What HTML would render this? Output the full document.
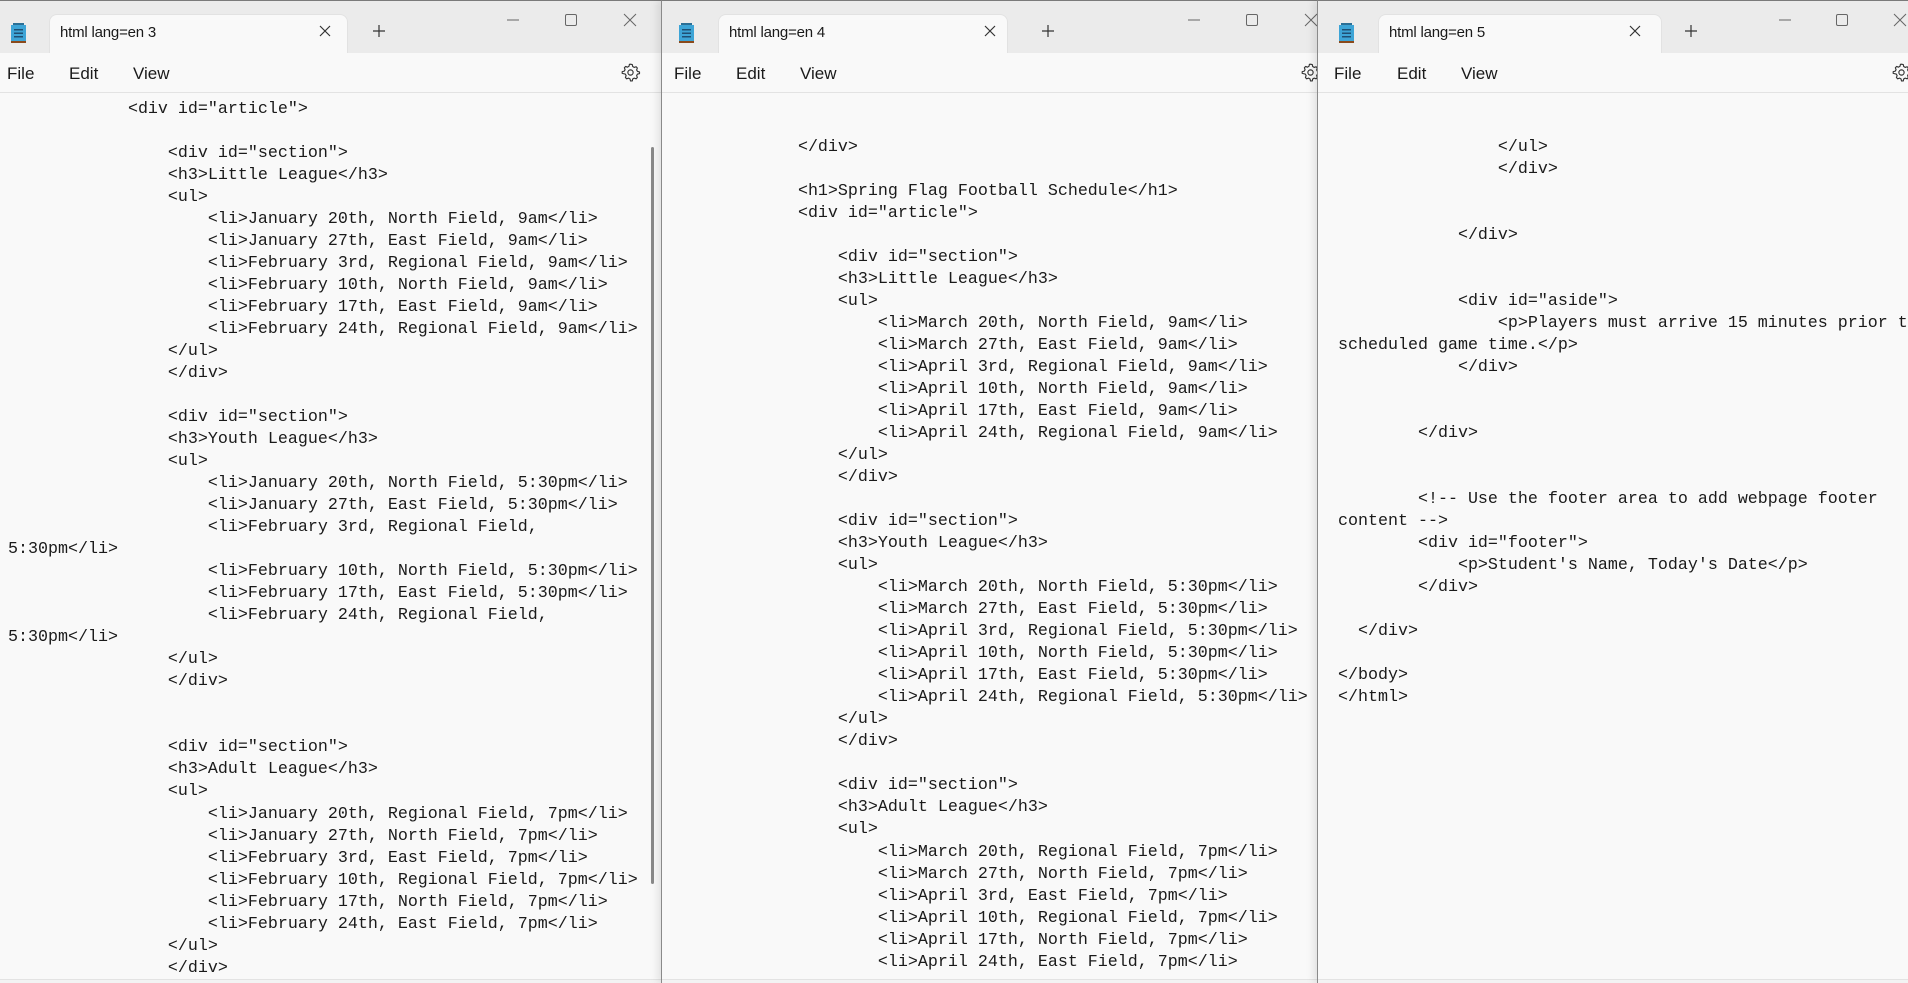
<!DOCTYPE html>
<html><head><meta charset="utf-8"><style>
*{margin:0;padding:0;box-sizing:border-box}
body{width:1908px;height:983px;overflow:hidden;background:#f9f9f9;position:relative;font-family:"Liberation Sans",sans-serif}
.win{position:absolute;top:0;height:983px;background:#f9f9f9;overflow:hidden;border-top:1px solid #7a7a7a}
.w2,.w3{border-left:1px solid #8a8a8a;box-shadow:-3px 0 8px rgba(0,0,0,.10)}
.tb{position:absolute;left:0;right:0;top:0;height:52px;background:#ebebeb}
.tab{position:absolute;top:13px;height:40px;width:299px;background:#f9f9f9;border-radius:8px 8px 0 0;border:1px solid #e2e2e2;border-bottom:none}
.tab span{position:absolute;left:10px;top:9px;font-size:15px;color:#1a1a1a;letter-spacing:-.2px}
.tab .x{position:absolute;left:268px;top:9px;width:14px;height:14px}
.plus{position:absolute;top:23px;width:14px;height:14px}
.ico{position:absolute;top:22px;width:15px;height:20px}
.ctl{position:absolute;top:12px;width:14px;height:14px}
.mb{position:absolute;left:0;right:0;top:52px;height:40px;background:#f9f9f9;border-bottom:1px solid #e3e3e3}
.mb span{position:absolute;top:11px;font-size:17px;color:#1a1a1a}
.gear{position:absolute;top:61px;width:21px;height:21px}
pre{position:absolute;font-family:"Liberation Mono",monospace;font-size:16.67px;line-height:22.02px;color:#1a1a1a;white-space:pre}
.sb{position:absolute;top:146px;width:3px;height:737px;background:#8a8a8a;border-radius:2px}
.st{position:absolute;left:0;right:0;top:978px;height:5px;border-top:1px solid #e3e3e3;background:#f3f3f3}
</style></head><body>

<!-- Window 1 -->
<div class="win" style="left:-5px;width:667px">
 <div class="tb"></div>
 <svg class="ico" style="left:16px" viewBox="0 0 15 20"><rect x="0" y="2" width="15" height="16" fill="#3da4d6"/><rect x="2" y="0" width="11" height="2" fill="#2b6f96"/><rect x="3" y="6" width="9" height="1.5" fill="#1f4f73"/><rect x="3" y="9.5" width="9" height="1.5" fill="#1f4f73"/><rect x="3" y="13" width="9" height="1.5" fill="#1f4f73"/><rect x="0" y="18" width="15" height="2" fill="#8a4a1c"/></svg>
 <div class="tab" style="left:54px"><span>html lang=en 3</span><svg class="x" viewBox="0 0 14 14"><path d="M2 2L12 12M12 2L2 12" stroke="#333" stroke-width="1.2"/></svg></div>
 <svg class="plus" style="left:377px" viewBox="0 0 14 14"><path d="M7 1V13M1 7H13" stroke="#333" stroke-width="1.2"/></svg>
 <svg class="ctl" style="left:511px" viewBox="0 0 14 14"><path d="M1 7H13" stroke="#666" stroke-width="1"/></svg>
 <svg class="ctl" style="left:569px" viewBox="0 0 14 14"><rect x="1.5" y="1.5" width="11" height="11" rx="1.5" fill="none" stroke="#666" stroke-width="1"/></svg>
 <svg class="ctl" style="left:628px" viewBox="0 0 14 14"><path d="M1 1L13 13M13 1L1 13" stroke="#666" stroke-width="1"/></svg>
 <div class="mb"><span style="left:12px">File</span><span style="left:74px">Edit</span><span style="left:138px">View</span></div>
 <svg class="gear" style="left:625px" viewBox="0 0 24 24"><path d="M12 2.5l2 .4.5 2.3 1.7 1 2.2-.8 1.4 1.5-.8 2.2 1 1.7 2.3.5v2l-2.3.5-1 1.7.8 2.2-1.4 1.5-2.2-.8-1.7 1-.5 2.3h-2l-.5-2.3-1.7-1-2.2.8-1.4-1.5.8-2.2-1-1.7L2.5 13v-2l2.3-.5 1-1.7-.8-2.2L6.4 5.1l2.2.8 1.7-1 .5-2.3z" fill="none" stroke="#333" stroke-width="1.3" stroke-linejoin="round"/><circle cx="12" cy="12" r="3" fill="none" stroke="#333" stroke-width="1.3"/></svg>
 <pre style="left:13px;top:98px">            &lt;div id="article"&gt;

                &lt;div id="section"&gt;
                &lt;h3&gt;Little League&lt;/h3&gt;
                &lt;ul&gt;
                    &lt;li&gt;January 20th, North Field, 9am&lt;/li&gt;
                    &lt;li&gt;January 27th, East Field, 9am&lt;/li&gt;
                    &lt;li&gt;February 3rd, Regional Field, 9am&lt;/li&gt;
                    &lt;li&gt;February 10th, North Field, 9am&lt;/li&gt;
                    &lt;li&gt;February 17th, East Field, 9am&lt;/li&gt;
                    &lt;li&gt;February 24th, Regional Field, 9am&lt;/li&gt;
                &lt;/ul&gt;
                &lt;/div&gt;

                &lt;div id="section"&gt;
                &lt;h3&gt;Youth League&lt;/h3&gt;
                &lt;ul&gt;
                    &lt;li&gt;January 20th, North Field, 5:30pm&lt;/li&gt;
                    &lt;li&gt;January 27th, East Field, 5:30pm&lt;/li&gt;
                    &lt;li&gt;February 3rd, Regional Field,
5:30pm&lt;/li&gt;
                    &lt;li&gt;February 10th, North Field, 5:30pm&lt;/li&gt;
                    &lt;li&gt;February 17th, East Field, 5:30pm&lt;/li&gt;
                    &lt;li&gt;February 24th, Regional Field,
5:30pm&lt;/li&gt;
                &lt;/ul&gt;
                &lt;/div&gt;


                &lt;div id="section"&gt;
                &lt;h3&gt;Adult League&lt;/h3&gt;
                &lt;ul&gt;
                    &lt;li&gt;January 20th, Regional Field, 7pm&lt;/li&gt;
                    &lt;li&gt;January 27th, North Field, 7pm&lt;/li&gt;
                    &lt;li&gt;February 3rd, East Field, 7pm&lt;/li&gt;
                    &lt;li&gt;February 10th, Regional Field, 7pm&lt;/li&gt;
                    &lt;li&gt;February 17th, North Field, 7pm&lt;/li&gt;
                    &lt;li&gt;February 24th, East Field, 7pm&lt;/li&gt;
                &lt;/ul&gt;
                &lt;/div&gt;</pre>
 <div class="sb" style="left:656px"></div>
 <div class="st"></div>
</div>

<!-- Window 2 -->
<div class="win w2" style="left:661px;width:690px">
 <div class="tb"></div>
 <svg class="ico" style="left:17px" viewBox="0 0 15 20"><rect x="0" y="2" width="15" height="16" fill="#3da4d6"/><rect x="2" y="0" width="11" height="2" fill="#2b6f96"/><rect x="3" y="6" width="9" height="1.5" fill="#1f4f73"/><rect x="3" y="9.5" width="9" height="1.5" fill="#1f4f73"/><rect x="3" y="13" width="9" height="1.5" fill="#1f4f73"/><rect x="0" y="18" width="15" height="2" fill="#8a4a1c"/></svg>
 <div class="tab" style="left:56px;width:290px"><span>html lang=en 4</span><svg class="x" viewBox="0 0 14 14" style="left:264px"><path d="M2 2L12 12M12 2L2 12" stroke="#333" stroke-width="1.2"/></svg></div>
 <svg class="plus" style="left:379px" viewBox="0 0 14 14"><path d="M7 1V13M1 7H13" stroke="#333" stroke-width="1.2"/></svg>
 <svg class="ctl" style="left:525px" viewBox="0 0 14 14"><path d="M1 7H13" stroke="#666" stroke-width="1"/></svg>
 <svg class="ctl" style="left:583px" viewBox="0 0 14 14"><rect x="1.5" y="1.5" width="11" height="11" rx="1.5" fill="none" stroke="#666" stroke-width="1"/></svg>
 <svg class="ctl" style="left:642px" viewBox="0 0 14 14"><path d="M1 1L13 13M13 1L1 13" stroke="#666" stroke-width="1"/></svg>
 <div class="mb"><span style="left:12px">File</span><span style="left:74px">Edit</span><span style="left:138px">View</span></div>
 <svg class="gear" style="left:638px" viewBox="0 0 24 24"><path d="M12 2.5l2 .4.5 2.3 1.7 1 2.2-.8 1.4 1.5-.8 2.2 1 1.7 2.3.5v2l-2.3.5-1 1.7.8 2.2-1.4 1.5-2.2-.8-1.7 1-.5 2.3h-2l-.5-2.3-1.7-1-2.2.8-1.4-1.5.8-2.2-1-1.7L2.5 13v-2l2.3-.5 1-1.7-.8-2.2L6.4 5.1l2.2.8 1.7-1 .5-2.3z" fill="none" stroke="#333" stroke-width="1.3" stroke-linejoin="round"/><circle cx="12" cy="12" r="3" fill="none" stroke="#333" stroke-width="1.3"/></svg>
 <pre style="left:16px;top:136px">            &lt;/div&gt;

            &lt;h1&gt;Spring Flag Football Schedule&lt;/h1&gt;
            &lt;div id="article"&gt;

                &lt;div id="section"&gt;
                &lt;h3&gt;Little League&lt;/h3&gt;
                &lt;ul&gt;
                    &lt;li&gt;March 20th, North Field, 9am&lt;/li&gt;
                    &lt;li&gt;March 27th, East Field, 9am&lt;/li&gt;
                    &lt;li&gt;April 3rd, Regional Field, 9am&lt;/li&gt;
                    &lt;li&gt;April 10th, North Field, 9am&lt;/li&gt;
                    &lt;li&gt;April 17th, East Field, 9am&lt;/li&gt;
                    &lt;li&gt;April 24th, Regional Field, 9am&lt;/li&gt;
                &lt;/ul&gt;
                &lt;/div&gt;

                &lt;div id="section"&gt;
                &lt;h3&gt;Youth League&lt;/h3&gt;
                &lt;ul&gt;
                    &lt;li&gt;March 20th, North Field, 5:30pm&lt;/li&gt;
                    &lt;li&gt;March 27th, East Field, 5:30pm&lt;/li&gt;
                    &lt;li&gt;April 3rd, Regional Field, 5:30pm&lt;/li&gt;
                    &lt;li&gt;April 10th, North Field, 5:30pm&lt;/li&gt;
                    &lt;li&gt;April 17th, East Field, 5:30pm&lt;/li&gt;
                    &lt;li&gt;April 24th, Regional Field, 5:30pm&lt;/li&gt;
                &lt;/ul&gt;
                &lt;/div&gt;

                &lt;div id="section"&gt;
                &lt;h3&gt;Adult League&lt;/h3&gt;
                &lt;ul&gt;
                    &lt;li&gt;March 20th, Regional Field, 7pm&lt;/li&gt;
                    &lt;li&gt;March 27th, North Field, 7pm&lt;/li&gt;
                    &lt;li&gt;April 3rd, East Field, 7pm&lt;/li&gt;
                    &lt;li&gt;April 10th, Regional Field, 7pm&lt;/li&gt;
                    &lt;li&gt;April 17th, North Field, 7pm&lt;/li&gt;
                    &lt;li&gt;April 24th, East Field, 7pm&lt;/li&gt;</pre>
 <div class="st"></div>
</div>

<!-- Window 3 -->
<div class="win w3" style="left:1317px;width:620px">
 <div class="tb"></div>
 <svg class="ico" style="left:21px" viewBox="0 0 15 20"><rect x="0" y="2" width="15" height="16" fill="#3da4d6"/><rect x="2" y="0" width="11" height="2" fill="#2b6f96"/><rect x="3" y="6" width="9" height="1.5" fill="#1f4f73"/><rect x="3" y="9.5" width="9" height="1.5" fill="#1f4f73"/><rect x="3" y="13" width="9" height="1.5" fill="#1f4f73"/><rect x="0" y="18" width="15" height="2" fill="#8a4a1c"/></svg>
 <div class="tab" style="left:60px;width:284px"><span>html lang=en 5</span><svg class="x" viewBox="0 0 14 14" style="left:249px"><path d="M2 2L12 12M12 2L2 12" stroke="#333" stroke-width="1.2"/></svg></div>
 <svg class="plus" style="left:366px" viewBox="0 0 14 14"><path d="M7 1V13M1 7H13" stroke="#333" stroke-width="1.2"/></svg>
 <svg class="ctl" style="left:460px" viewBox="0 0 14 14"><path d="M1 7H13" stroke="#666" stroke-width="1"/></svg>
 <svg class="ctl" style="left:517px" viewBox="0 0 14 14"><rect x="1.5" y="1.5" width="11" height="11" rx="1.5" fill="none" stroke="#666" stroke-width="1"/></svg>
 <svg class="ctl" style="left:575px" viewBox="0 0 14 14"><path d="M1 1L13 13M13 1L1 13" stroke="#666" stroke-width="1"/></svg>
 <div class="mb"><span style="left:16px">File</span><span style="left:79px">Edit</span><span style="left:143px">View</span></div>
 <svg class="gear" style="left:573px" viewBox="0 0 24 24"><path d="M12 2.5l2 .4.5 2.3 1.7 1 2.2-.8 1.4 1.5-.8 2.2 1 1.7 2.3.5v2l-2.3.5-1 1.7.8 2.2-1.4 1.5-2.2-.8-1.7 1-.5 2.3h-2l-.5-2.3-1.7-1-2.2.8-1.4-1.5.8-2.2-1-1.7L2.5 13v-2l2.3-.5 1-1.7-.8-2.2L6.4 5.1l2.2.8 1.7-1 .5-2.3z" fill="none" stroke="#333" stroke-width="1.3" stroke-linejoin="round"/><circle cx="12" cy="12" r="3" fill="none" stroke="#333" stroke-width="1.3"/></svg>
 <pre style="left:20px;top:136px">                &lt;/ul&gt;
                &lt;/div&gt;


            &lt;/div&gt;


            &lt;div id="aside"&gt;
                &lt;p&gt;Players must arrive 15 minutes prior to
scheduled game time.&lt;/p&gt;
            &lt;/div&gt;


        &lt;/div&gt;


        &lt;!-- Use the footer area to add webpage footer
content --&gt;
        &lt;div id="footer"&gt;
            &lt;p&gt;Student's Name, Today's Date&lt;/p&gt;
        &lt;/div&gt;

  &lt;/div&gt;

&lt;/body&gt;
&lt;/html&gt;</pre>
 <div class="st"></div>
</div>
</body></html>
